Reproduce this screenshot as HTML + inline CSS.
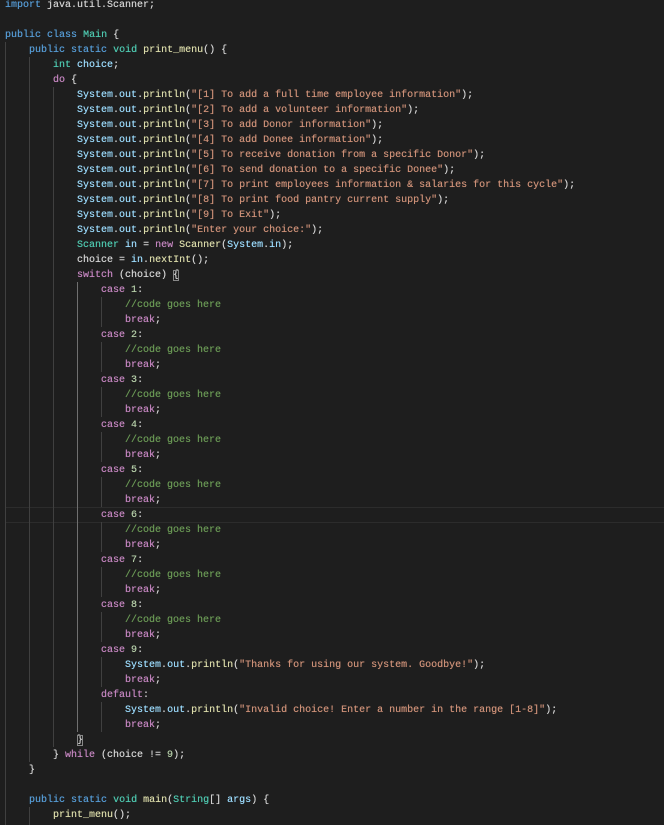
<!DOCTYPE html>
<html><head><meta charset="utf-8"><style>
html,body{margin:0;padding:0;background:#1e1e1e;width:664px;height:825px;overflow:hidden}
#c{position:relative;width:664px;height:825px}
pre{position:absolute;left:5px;top:-2.5px;margin:0;font-family:"Liberation Mono",monospace;font-size:10px;line-height:15px;color:#d4d4d4;white-space:pre;text-shadow:0 0 0.4px currentColor}
.k{color:#569cd6}.t{color:#4ec9b0}.f{color:#dcdcaa}.v{color:#9cdcfe}.s{color:#ce9178}.p{color:#c586c0}.c{color:#6a9955}.n{color:#b5cea8}
.g{position:absolute;width:1px;background:#404040}
.hl{position:absolute;left:5px;right:0;top:507px;height:14px;border:1px solid #2c2c2c;border-right:none}
.bm{outline:1px solid #888;outline-offset:-1px}
</style></head><body><div id="c">
<div class="hl"></div>
<div class="g" style="left:5px;top:42px;height:783px"></div>
<div class="g" style="left:29px;top:57px;height:705px"></div>
<div class="g" style="left:29px;top:807px;height:18px"></div>
<div class="g" style="left:53px;top:87px;height:660px"></div>
<div class="g" style="left:77px;top:282px;height:450px;background:#707070"></div>
<div class="g" style="left:101px;top:297px;height:30px"></div>
<div class="g" style="left:101px;top:342px;height:30px"></div>
<div class="g" style="left:101px;top:387px;height:30px"></div>
<div class="g" style="left:101px;top:432px;height:30px"></div>
<div class="g" style="left:101px;top:477px;height:30px"></div>
<div class="g" style="left:101px;top:522px;height:30px"></div>
<div class="g" style="left:101px;top:567px;height:30px"></div>
<div class="g" style="left:101px;top:612px;height:30px"></div>
<div class="g" style="left:101px;top:657px;height:30px"></div>
<div class="g" style="left:101px;top:702px;height:30px"></div>
<pre><span class="k">import</span> java.util.Scanner;

<span class="k">public</span> <span class="k">class</span> <span class="t">Main</span> {
    <span class="k">public</span> <span class="k">static</span> <span class="t">void</span> <span class="f">print_menu</span>() {
        <span class="t">int</span> <span class="v">choice</span>;
        <span class="p">do</span> {
            <span class="v">System</span>.<span class="v">out</span>.<span class="f">println</span>(<span class="s">"[1] To add a full time employee information"</span>);
            <span class="v">System</span>.<span class="v">out</span>.<span class="f">println</span>(<span class="s">"[2] To add a volunteer information"</span>);
            <span class="v">System</span>.<span class="v">out</span>.<span class="f">println</span>(<span class="s">"[3] To add Donor information"</span>);
            <span class="v">System</span>.<span class="v">out</span>.<span class="f">println</span>(<span class="s">"[4] To add Donee information"</span>);
            <span class="v">System</span>.<span class="v">out</span>.<span class="f">println</span>(<span class="s">"[5] To receive donation from a specific Donor"</span>);
            <span class="v">System</span>.<span class="v">out</span>.<span class="f">println</span>(<span class="s">"[6] To send donation to a specific Donee"</span>);
            <span class="v">System</span>.<span class="v">out</span>.<span class="f">println</span>(<span class="s">"[7] To print employees information &amp; salaries for this cycle"</span>);
            <span class="v">System</span>.<span class="v">out</span>.<span class="f">println</span>(<span class="s">"[8] To print food pantry current supply"</span>);
            <span class="v">System</span>.<span class="v">out</span>.<span class="f">println</span>(<span class="s">"[9] To Exit"</span>);
            <span class="v">System</span>.<span class="v">out</span>.<span class="f">println</span>(<span class="s">"Enter your choice:"</span>);
            <span class="t">Scanner</span> <span class="v">in</span> = <span class="p">new</span> <span class="f">Scanner</span>(<span class="v">System</span>.<span class="v">in</span>);
            choice = <span class="v">in</span>.<span class="f">nextInt</span>();
            <span class="p">switch</span> (choice) <span class="bm">{</span>
                <span class="p">case</span> <span class="n">1</span>:
                    <span class="c">//code goes here</span>
                    <span class="p">break</span>;
                <span class="p">case</span> <span class="n">2</span>:
                    <span class="c">//code goes here</span>
                    <span class="p">break</span>;
                <span class="p">case</span> <span class="n">3</span>:
                    <span class="c">//code goes here</span>
                    <span class="p">break</span>;
                <span class="p">case</span> <span class="n">4</span>:
                    <span class="c">//code goes here</span>
                    <span class="p">break</span>;
                <span class="p">case</span> <span class="n">5</span>:
                    <span class="c">//code goes here</span>
                    <span class="p">break</span>;
                <span class="p">case</span> <span class="n">6</span>:
                    <span class="c">//code goes here</span>
                    <span class="p">break</span>;
                <span class="p">case</span> <span class="n">7</span>:
                    <span class="c">//code goes here</span>
                    <span class="p">break</span>;
                <span class="p">case</span> <span class="n">8</span>:
                    <span class="c">//code goes here</span>
                    <span class="p">break</span>;
                <span class="p">case</span> <span class="n">9</span>:
                    <span class="v">System</span>.<span class="v">out</span>.<span class="f">println</span>(<span class="s">"Thanks for using our system. Goodbye!"</span>);
                    <span class="p">break</span>;
                <span class="p">default</span>:
                    <span class="v">System</span>.<span class="v">out</span>.<span class="f">println</span>(<span class="s">"Invalid choice! Enter a number in the range [1-8]"</span>);
                    <span class="p">break</span>;
            <span class="bm">}</span>
        } <span class="p">while</span> (choice != <span class="n">9</span>);
    }

    <span class="k">public</span> <span class="k">static</span> <span class="t">void</span> <span class="f">main</span>(<span class="t">String</span>[] <span class="v">args</span>) {
        <span class="f">print_menu</span>();
</pre>
</div></body></html>
